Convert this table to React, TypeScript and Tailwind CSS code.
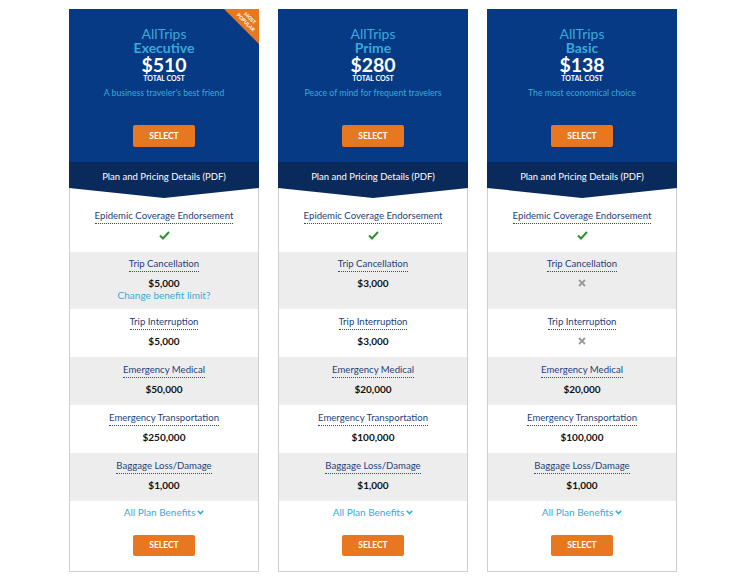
import React from "react";

const Check = () => (
  <svg width="11" height="9" viewBox="0 0 11 9"><path d="M1 4.5 L4 7.5 L10 1" stroke="#2f8f2f" strokeWidth="2" fill="none" /></svg>
);
const Cross = () => (
  <svg width="8" height="8" viewBox="0 0 8 8"><path d="M1 1 L7 7 M7 1 L1 7" stroke="#9a9a9a" strokeWidth="1.8" fill="none" /></svg>
);

const plans = [
  { name: "Executive", price: "$510", tag: "A business traveler's best friend", popular: true,
    tc: "$5,000", link: "Change benefit limit?", ti: "$5,000", em: "$50,000", et: "$250,000", bl: "$1,000" },
  { name: "Prime", price: "$280", tag: "Peace of mind for frequent travelers", popular: false,
    tc: "$3,000", link: "", ti: "$3,000", em: "$20,000", et: "$100,000", bl: "$1,000" },
  { name: "Basic", price: "$138", tag: "The most economical choice", popular: false,
    tc: "", link: "", ti: "", em: "$20,000", et: "$100,000", bl: "$1,000" },
];

function Label({ t }: { t: string }) {
  return (
    <span className="text-[9.6px] leading-[12px] text-[#1d3f7a] border-b border-dotted border-[#2a4e9a] pb-[1px]">{t}</span>
  );
}

function Val({ v }: { v?: string }) {
  if (!v) return <div className="mt-[5px] h-[12px] flex items-center justify-center"><Cross /></div>;
  return <div className="mt-[5px] text-[10px] leading-[12px] font-bold text-[#111]">{v}</div>;
}

function Card({ p }: { p: typeof plans[number] }) {
  return (
    <div className="w-[190px] bg-white border border-[#cfcfcf] border-t-0 flex flex-col">
      <div className="relative bg-[#063a84] flex flex-col items-center pt-[18px] pb-[15px] -mx-px w-[190px] self-center">
        {p.popular && (
          <div className="absolute top-0 right-0 w-[35px] h-[35px] bg-[#e87722] [clip-path:polygon(0_0,100%_0,100%_100%)]">
            <div className="absolute top-[5px] right-[-4px] rotate-45 text-white text-[5px] leading-[6px] font-bold text-center w-[30px]">MOST<br />POPULAR</div>
          </div>
        )}
        <div className="text-[14px] leading-[14px] text-[#39a9dc]">AllTrips</div>
        <div className="text-[14px] leading-[14px] font-bold text-[#39a9dc]">{p.name}</div>
        <div className="text-[19.5px] leading-[20px] font-bold text-white">{p.price}</div>
        <div className="text-[7px] leading-[7px] font-bold text-white">TOTAL COST</div>
        <div className="text-[8.7px] leading-[10px] text-[#39a9dc] mt-[6px]">{p.tag}</div>
        <div className="mt-[27px] w-[62px] h-[22px] rounded-[2px] bg-[#e87722] flex items-center justify-center text-white text-[8.5px] font-bold">SELECT</div>
      </div>
      <div className="-mx-px w-[190px] self-center h-[36px] bg-[#0a2a5c] [clip-path:polygon(0_0,100%_0,100%_72%,50%_100%,0_72%)] flex justify-center pt-[9px]">
        <span className="text-white text-[9.5px] leading-[12px]">Plan and Pricing Details (PDF)</span>
      </div>
      <div className="h-[54px] bg-white flex flex-col items-center pt-[12px]">
        <Label t="Epidemic Coverage Endorsement" />
        <div className="mt-[5px] h-[12px] flex items-center"><Check /></div>
      </div>
      <div className="h-[57px] bg-[#ededed] flex flex-col items-center pt-[6px]">
        <Label t="Trip Cancellation" />
        <Val v={p.tc} />
        {p.link && <div className="text-[10px] leading-[12px] text-[#39a9dc]">{p.link}</div>}
      </div>
      <div className="h-[48px] bg-white flex flex-col items-center pt-[7px]">
        <Label t="Trip Interruption" />
        <Val v={p.ti} />
      </div>
      <div className="h-[48px] bg-[#ededed] flex flex-col items-center pt-[7px]">
        <Label t="Emergency Medical" />
        <Val v={p.em} />
      </div>
      <div className="h-[48px] bg-white flex flex-col items-center pt-[7px]">
        <Label t="Emergency Transportation" />
        <Val v={p.et} />
      </div>
      <div className="h-[48px] bg-[#ededed] flex flex-col items-center pt-[7px]">
        <Label t="Baggage Loss/Damage" />
        <Val v={p.bl} />
      </div>
      <div className="flex flex-col items-center pt-[5px] pb-[15px]">
        <div className="text-[10px] leading-[12px] text-[#39a9dc] flex items-center gap-[2px]">
          All Plan Benefits
          <svg width="7" height="5" viewBox="0 0 7 5"><path d="M0.8 0.8 L3.5 3.6 L6.2 0.8" stroke="#39a9dc" strokeWidth="1.6" fill="none" /></svg>
        </div>
        <div className="mt-[17px] w-[62px] h-[21px] rounded-[2px] bg-[#e87722] flex items-center justify-center text-white text-[8.5px] font-bold">SELECT</div>
      </div>
    </div>
  );
}

export default function App() {
  return (
    <div className="w-[750px] h-[586px] bg-white pt-[9px] pl-[69px] flex gap-[19px] items-start" style={{ fontFamily: "Lato, 'Open Sans', sans-serif" }}>
      {plans.map((p) => (
        <Card key={p.name} p={p} />
      ))}
    </div>
  );
}
